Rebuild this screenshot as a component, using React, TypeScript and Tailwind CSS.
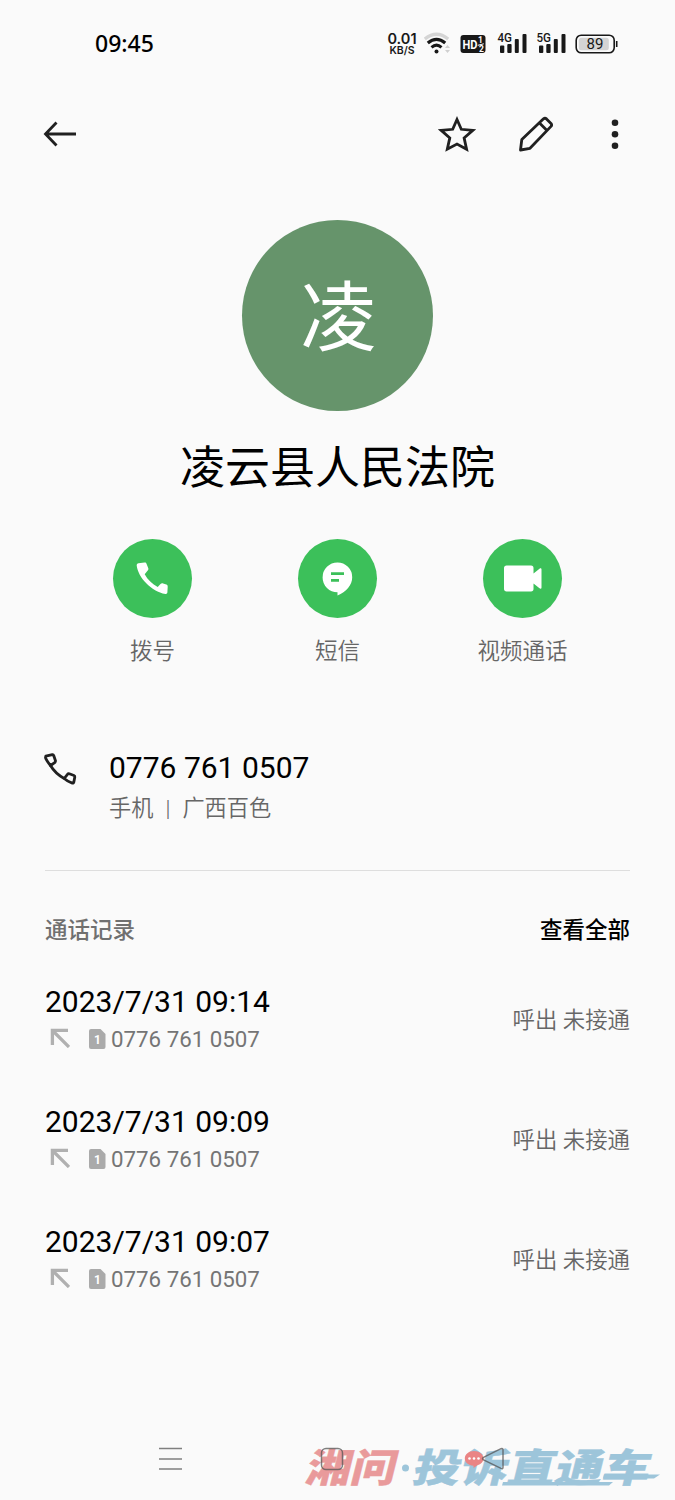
const actions = [
  { label: "拨号", icon: <DialIcon /> },
  { label: "短信", icon: <MessageIcon /> },
  { label: "视频通话", icon: <VideoIcon /> },
];

const calls = [
  { time: "2023/7/31 09:14", number: "0776 761 0507", status: "呼出 未接通" },
  { time: "2023/7/31 09:09", number: "0776 761 0507", status: "呼出 未接通" },
  { time: "2023/7/31 09:07", number: "0776 761 0507", status: "呼出 未接通" },
];

function DialIcon() {
  return (
    <svg width="79" height="79" viewBox="0 0 79 79" fill="#fff">
      <path d="M25.500 24.300l6-.8c1.200-.1 1.700.4 2 1.300l1.700 4.200c.4 1 .2 1.800-.5 2.600l-3 3.600c3 5.500 7.500 9.800 13 12.800l2.800-2.900c.8-.8 1.600-.9 2.600-.6l3.200 1.100c1 .4 1.500 1.100 1.400 2.300l-.3 5.400c-.1 1.200-.8 1.900-2 1.700C38.500 52.500 25 38.500 23.700 26.500c-.1-1.200.6-2 1.800-2.200z" />
    </svg>
  );
}

function MessageIcon() {
  return (
    <svg width="79" height="79" viewBox="0 0 79 79">
      <path
        fill="#fff"
        d="M39.500 23.500a14.700 14.700 0 0 1 14.700 14.800c0 8-6 14.500-14.700 18.200v-3.200a14.900 14.900 0 0 1 0-29.800z"
      />
      <path fill="#3cc05a" d="M33 33.300h13v2.700H33zM33 40h8v2.700h-8z" />
    </svg>
  );
}

function VideoIcon() {
  return (
    <svg width="79" height="79" viewBox="0 0 79 79" fill="#fff">
      <path d="M23.500 26.500h24.500c1.800 0 2.500 1 2.500 2.500v5.500l6-4.800c1-.8 2-.5 2 .8v18c0 1.300-1 1.600-2 .8l-6-4.800V50c0 1.500-.8 2.500-2.500 2.500H23.500c-1.500 0-2.500-1-2.500-2.500V29c0-1.500 1-2.500 2.500-2.500z" />
    </svg>
  );
}

function Signal({ type }: { type: string }) {
  return (
    <svg width="31" height="26" viewBox="0 0 31 26">
      <g fill="#181818">
        <rect x="3" y="14.500" width="4.300" height="7.500" rx="1" />
        <rect x="10.300" y="13" width="4.300" height="9" rx="1" />
        <rect x="17.800" y="8" width="4" height="14" rx="1" />
        <rect x="25.500" y="3" width="4" height="19" rx="1" />
      </g>
      <text
        x="0.500"
        y="11"
        textLength="14.500"
        lengthAdjust="spacingAndGlyphs"
        className="fill-[#181818] font-['Roboto'] text-[13px] font-medium"
      >
        {type}
      </text>
    </svg>
  );
}

function StatusBar() {
  return (
    <div className="flex h-[88px] items-center pr-[57px] pl-[95px]">
      <span className="flex-1 pb-px font-['Noto_Sans',sans-serif] text-[23px] font-medium text-black">
        09:45
      </span>
      <div className="mr-[6px] flex w-8 flex-col items-center font-['Inter',sans-serif] leading-none whitespace-nowrap text-[#181818]">
        <span className="text-[14.500px] leading-[13px] font-semibold">0.01</span>
        <span className="text-[10.500px] leading-[12px] font-semibold">KB/S</span>
      </div>
      <svg width="27" height="24" viewBox="0 0 27 24" fill="none" className="mr-[9px]">
        <path d="M.8 7Q12.500-2.500 24.200 7" stroke="#d5d5d5" strokeWidth="3.200" />
        <path d="M3.800 11q8.700-7.200 17.400 0" stroke="#181818" strokeWidth="3.200" />
        <path d="M7.500 15.300q5-4.300 10 0" stroke="#181818" strokeWidth="3" />
        <circle cx="12.500" cy="19.600" r="2" fill="#181818" />
        <path d="M21 16l2.500-3 2.500 3zM21 18l2.500 3 2.500-3z" fill="#d0d0d0" />
      </svg>
      <svg width="26" height="20" viewBox="0 0 26 20" className="mr-[11px]">
        <rect x="0.500" y="1" width="25" height="18" rx="3" fill="#181818" />
        <g className="fill-white font-['Roboto'] font-bold">
          <text x="2.500" y="14.800" textLength="15" lengthAdjust="spacingAndGlyphs" fontSize="13.500">
            HD
          </text>
          <text x="18" y="9" fontSize="8.500">
            1
          </text>
          <text x="19" y="17.500" fontSize="8.500">
            2
          </text>
        </g>
        <path d="M17.800 11.300l6-1.500" stroke="#fff" strokeWidth="1" />
      </svg>
      <div className="mr-[8px] flex gap-2">
        <Signal type="4G" />
        <Signal type="5G" />
      </div>
      <svg width="43" height="20" viewBox="0 0 43 20">
        <rect x="1.200" y="1.200" width="38" height="17.600" rx="5" fill="none" stroke="#181818" strokeWidth="1.600" />
        <rect x="3.800" y="3.800" width="30" height="12.400" rx="2.500" fill="#d4d4d4" />
        <path d="M41.700 7v6" stroke="#181818" strokeWidth="1.600" />
        <text x="20" y="15" textAnchor="middle" className="fill-[#181818] font-['Roboto'] text-[15px]">
          89
        </text>
      </svg>
    </div>
  );
}

function Toolbar() {
  return (
    <div className="flex h-[92px] items-center pr-[55px] pl-[42px]">
      <svg width="36" height="28" viewBox="0 0 36 28" fill="none" stroke="#202020" strokeWidth="2.800">
        <path d="M3.500 14H34M14.500 2.500L3.500 14l11 11.500" />
      </svg>
      <div className="flex-1" />
      <svg width="38" height="38" viewBox="0 0 38 38" fill="none" stroke="#202020" strokeWidth="2.800" className="mr-[41px]">
        <path d="M19 4.500l4.300 9.800 11.500 1.100-8.700 7.500 2.500 11.300-9.600-5.200L9.300 34.200l2.500-11.300-8.600-7.500 11.500-1.100z" />
      </svg>
      <svg width="38" height="38" viewBox="0 0 38 38" fill="none" stroke="#202020" strokeWidth="2.800" className="mr-[55px]">
        <path d="M3.500 35l1.300-10.500L26.500 3.800q1.500-1.200 3 .1l4.500 4.500q1.300 1.500 0 3L13 33.300zM22.500 8l8 8" strokeLinejoin="round" />
      </svg>
      <svg width="10" height="32" viewBox="0 0 10 32" fill="#202020">
        <circle cx="5" cy="4.700" r="3.300" />
        <circle cx="5" cy="16.300" r="3.300" />
        <circle cx="5" cy="27.800" r="3.300" />
      </svg>
    </div>
  );
}

function NavBar() {
  return (
    <div className="h-[83px]">
      <svg width="675" height="83" viewBox="0 0 675 83" fill="none">
        {/* site mark below the navigation buttons */}
        <g className="font-['Noto_Sans_CJK_SC'] font-black" strokeWidth="0.400">
          <g transform="translate(304 65) skewX(-14)" fill="#e99a9b" stroke="#e99a9b">
            <text textLength="90" lengthAdjust="spacingAndGlyphs" fontSize="39">
              湘问
            </text>
          </g>
          <circle cx="405.500" cy="51" r="3.500" fill="#9dc5da" />
          <g transform="translate(411 65) skewX(-14)" fill="#9dc5da" stroke="#9dc5da">
            <text textLength="237" lengthAdjust="spacingAndGlyphs" fontSize="39">
              投诉直通车
            </text>
          </g>
        </g>
        <path d="M503 65h110l-4 3.500H502zM604 57.500h56l-6 4h-51z" fill="#9dc5da" />
        <path d="M474 34c5.500 0 9.500 3.200 9.500 7.500 0 3.300-2.500 5.800-6 6.700l-4 2.800v-2.200c-5-.4-8.700-3.300-8.700-7.300 0-4.300 4-7.500 9.200-7.500z" fill="#ea8585" />
        <g fill="#fff">
          <circle cx="469.500" cy="41.500" r="1.300" />
          <circle cx="474" cy="41.500" r="1.300" />
          <circle cx="478.500" cy="41.500" r="1.300" />
        </g>
        <g stroke="#555" strokeOpacity="0.750" strokeWidth="1.500">
          <path d="M159 31.500h23M159 42h23M159 52h23" />
          <rect x="321.500" y="31.500" width="21" height="21" rx="4.500" />
          <path d="M483.500 40.300L501 31.700q2-.8 2 1.200v17.300q0 2-2 1.200l-17.500-8.600q-2-1.200 0-2.500z" />
        </g>
      </svg>
    </div>
  );
}

export default function App() {
  return (
    <main className="flex h-[1500px] w-[675px] flex-col overflow-hidden bg-[#fafafa] font-['Roboto','Noto_Sans_CJK_SC',sans-serif] text-black">
      <StatusBar />
      <Toolbar />

      <section className="mt-10 flex flex-col items-center">
        <div className="flex size-[191px] items-center justify-center rounded-full bg-[#66946b] pt-[6px] pl-[2px] text-[76px] leading-none text-white">
          凌
        </div>
        <h1 className="mt-[26px] text-[45px] leading-[64px]">凌云县人民法院</h1>
      </section>

      <div className="mt-[38px] flex justify-center">
        {actions.map((action) => (
          <button key={action.label} className="flex w-[185px] flex-col items-center">
            <span className="size-[79px] rounded-full bg-[#3cc05a]">{action.icon}</span>
            <span className="mt-[17px] text-[22.500px] leading-8 font-[350] text-[#666]">
              {action.label}
            </span>
          </button>
        ))}
      </div>

      <section className="mx-[45px] mt-[81px] flex h-[123px] border-b border-[#dedede]">
        <svg width="34" height="34" viewBox="0 0 34 34" fill="none" stroke="#202020" strokeWidth="2.800" strokeLinejoin="round" className="mt-[4px] -ml-[2px]">
          <path d="M2.800 4.200l6.500-1.500q1-.2 1.400.8l1.700 5q.3 1-.4 1.800L7.500 13.500C4.500 9.800 2.700 6.800 2.500 5.500z" />
          <path d="M7.500 13.500c3.500 6 7.500 9.500 13.700 13" />
          <path d="M21.200 26.500l3.300-4.200q.7-.9 1.800-.5l4.700 1.700q1 .4.800 1.400l-1 5.300q-.3 1.200-1.500.9-4.500-1.400-8.100-4.600z" />
        </svg>
        <div className="ml-[32px]">
          <p className="text-[30px] leading-[40px]">0776 761 0507</p>
          <p className="flex text-[22.200px] leading-[41px] font-[350] text-[#666]">
            <span>手机</span>
            <span className="w-[29px] text-center">|</span>
            <span>广西百色</span>
          </p>
        </div>
      </section>

      <section className="mx-[45px] mt-[44px]">
        <div className="flex h-8 items-center justify-between text-[22.500px] font-medium">
          <h2 className="text-[#707070]">通话记录</h2>
          <button>查看全部</button>
        </div>
        <div className="mt-[22px]">
          {calls.map((call) => (
            <div key={call.time} className="flex h-[120px] items-start justify-between pt-[12px]">
              <div>
                <p className="text-[30px] leading-[41px]">{call.time}</p>
                <div className="flex h-[35px] items-center">
                  <svg width="20" height="20" viewBox="0 0 20 20" fill="none" stroke="#b0b0b0" strokeWidth="3.300" className="mb-[3px] ml-[5px]">
                    <path d="M2.400 17V2.400H18M3 3l16 16" />
                  </svg>
                  <svg width="17" height="20" viewBox="0 0 17 20" className="mb-[2px] ml-[19px]">
                    <path d="M2 0h9.500l5 5v13q0 2-2 2H2q-2 0-2-2V2q0-2 2-2z" fill="#aaa" />
                    <text x="8.500" y="14.500" textAnchor="middle" className="fill-white text-[12px] font-bold">
                      1
                    </text>
                  </svg>
                  <span className="ml-[5px] pt-px text-[22.300px] text-[#757575]">{call.number}</span>
                </div>
              </div>
              <span className="mt-[23px] text-[22.400px] leading-8 font-[350] text-[#666]">{call.status}</span>
            </div>
          ))}
        </div>
      </section>

      <div className="flex-1" />
      <NavBar />
    </main>
  );
}
